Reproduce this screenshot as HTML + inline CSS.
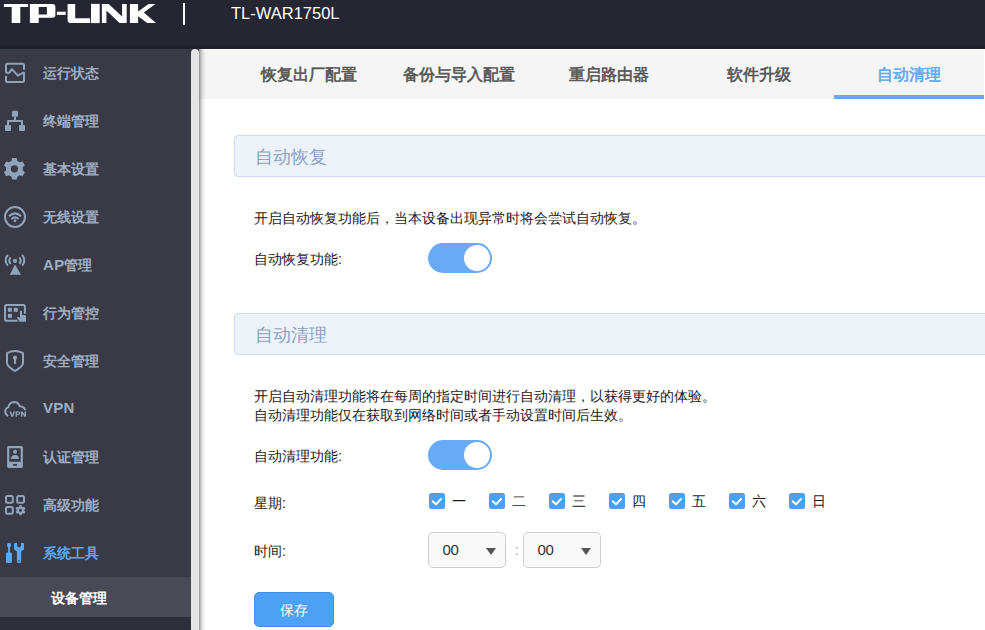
<!DOCTYPE html>
<html><head><meta charset="utf-8">
<style>
*{margin:0;padding:0;box-sizing:border-box}
html,body{width:985px;height:630px;overflow:hidden;background:#fff;font-family:"Liberation Sans",sans-serif}
.a{position:absolute}
#hdr{left:0;top:0;width:985px;height:49px;background:linear-gradient(to bottom,#262632 0,#262632 44px,#20202b 47.5px,#20202b 49px)}
#sep{left:182.5px;top:3px;width:2px;height:22px;background:#f6f6f6}
#model{left:231px;top:3px;font-size:16.5px;color:#fff;line-height:20px}
#side{left:0;top:49px;width:199px;height:581px;background:#3a3a47}
#sb{left:191px;top:49px;width:8px;height:581px;background:#e4e4e4;border-radius:4px 4px 0 0}
#shadow{left:199px;top:49px;width:8px;height:581px;background:linear-gradient(to right,rgba(0,0,0,.42) 0,rgba(0,0,0,.2) 2px,rgba(0,0,0,.06) 4.5px,rgba(0,0,0,0) 7px)}
#tabs{left:199px;top:49px;width:785px;height:50px;background:#f5f5f5;border-top:1px solid #fff}
.tab{top:62.5px;width:150px;text-align:center;font-size:16px;color:#555;-webkit-text-stroke:0.6px #555;line-height:24px}
#ul{left:834px;top:95px;width:150px;height:4px;background:#62a8f2}
.mi{left:43px;font-size:14px;font-weight:bold;color:#9eadc0;line-height:20px}
.ic{left:0;width:30px;height:30px}
.sec{left:234px;width:760px;height:42px;background:#edf2f9;border:1px solid #cddcec;border-radius:4px}
.sec span{position:absolute;left:20px;top:10px;font-size:18px;color:#8aa3c2;line-height:22px}
.t{font-size:14px;color:#1a1a1a;line-height:18px}
.tg{left:428px;width:64px;height:30px;border-radius:15px;background:#66abf4}
.tg:after{content:"";position:absolute;right:2px;top:2px;width:26px;height:26px;border-radius:13px;background:#fff}
.cb{top:493px;width:16px;height:16px;border-radius:3px;background:#4a9ff6}
.wd{top:492px;font-size:14px;color:#1a1a1a;line-height:18px}
.sel{top:532px;width:78px;height:36px;border:1px solid #cfcfcf;border-radius:5px;background:#f9f9f9}
.sel span{position:absolute;left:13.5px;top:8px;font-size:15px;letter-spacing:-0.3px;color:#333;line-height:18px}
.sel i{position:absolute;left:57px;top:15px;width:0;height:0;border-left:5px solid transparent;border-right:5px solid transparent;border-top:7px solid #555}
#btn{left:254px;top:592px;width:80px;height:35px;background:#4ca1f7;border:1px solid #3f90e6;border-radius:5px;color:#fff;font-size:14px;text-align:center;line-height:34px}
</style></head><body>
<div id="hdr" class="a"></div>
<svg class="a" style="left:0;top:0" width="160" height="30" viewBox="0 0 160 30">
<g fill="#fff">
<polygon points="3.9,3.9 28.1,3.9 28.1,7.1 20.3,7.1 20.3,23.1 11.7,23.1 11.7,7.1 3.9,7.1"/>
<path d="M29.9 3.9H52.4Q55.4 3.9 55.4 6.9V14.8Q55.4 17.8 52.4 17.8H38.7V23.1H29.9ZM38.7 7.1V14.6H46.9V7.1Z" fill-rule="evenodd"/>
<rect x="56.9" y="11.7" width="8.8" height="3.2"/>
<path d="M67.6 4.1H75.2V18.3H90.2V22.9H70.4Q67.6 22.9 67.6 20.1Z"/>
<rect x="91" y="3.9" width="8.7" height="19.2"/>
<polygon points="101.9,3.9 108.6,3.9 122.1,16.6 122.1,3.9 126.7,3.9 126.7,23.1 119.6,23.1 106.4,10.6 106.4,23.1 101.9,23.1"/>
<polygon points="129.9,3.9 138.1,3.9 138.1,11.6 148.6,3.9 155.4,3.9 143.8,12.6 156,23.1 147.2,23.1 138.1,16.3 138.1,23.1 129.9,23.1"/>
</g></svg>
<div id="sep" class="a"></div>
<div id="model" class="a">TL-WAR1750L</div>

<div id="side" class="a"></div>
<div class="a" style="left:0;top:577px;width:191px;height:40px;background:#4a4a57"></div>
<div class="a" style="left:0;top:617px;width:191px;height:13px;background:#2f2f3b"></div>
<div id="sb" class="a"></div>

<!-- sidebar icons -->
<svg class="a" style="left:0;top:48px" width="30" height="530" viewBox="0 48 30 530">
<g fill="none" stroke="#8fa3bb" stroke-width="2" stroke-linejoin="round">
<!-- status -->
<path d="M6 72.8V65.3Q6 63.8 7.5 63.8H22.5Q24 63.8 24 65.3V69.7"/>
<path d="M6 72.8H9.3L11.9 69.1L17.9 75.6L22.9 72.8H24V80.5Q24 82 22.5 82H7.5Q6 82 6 80.5V75.9"/>
<!-- network -->
<path d="M15 116.5V121H8V125M15 121H22V125"/>
<!-- wifi -->
<circle cx="15" cy="217" r="10"/>
<path d="M9 216.3Q15 210.5 21 216.3M11.5 219Q15 215.8 18.5 219"/>
<!-- ap -->
<path d="M7.8 254.8Q3.5 260.2 7.8 265.6M22.2 254.8Q26.5 260.2 22.2 265.6M10.6 257.4Q8 260.7 10.6 264M19.4 257.4Q22 260.7 19.4 264"/>
<!-- behaviour -->
<path d="M24.9 313.7V306.5Q24.9 305 23.4 305H6.6Q5 305 5 306.5V319.3Q5 320.8 6.6 320.8H17.5"/>
<!-- shield -->
<path d="M7 353.2Q15 349 23 353.2V363Q23 366.5 15 371Q7 366.5 7 363Z"/>
<!-- vpn cloud -->
<path d="M7.9 416.2Q4.3 413 5.6 409.7Q6.5 407.6 8.3 407.3Q9.6 402.1 14 402Q18.4 402.1 19.6 406.3Q24.3 406.6 25.3 410.3"/>
<!-- advanced -->
<rect x="6" y="496" width="6.8" height="6.8" rx="1.5"/>
<rect x="17.2" y="496" width="6.8" height="6.8" rx="1.5"/>
<rect x="6" y="507" width="6.8" height="6.8" rx="1.5"/>
</g>
<g fill="#8fa3bb">
<rect x="12" y="110.8" width="6" height="6" rx="1"/>
<rect x="5" y="125" width="6" height="6" rx="1"/>
<rect x="19" y="125" width="6" height="6" rx="1"/>
<!-- gear -->
<path fill-rule="evenodd" d="M11.50 160.92L12.10 158.04L16.70 158.04L17.30 160.92A8.40 8.40 0 0 1 19.78 162.35L22.57 161.43L24.87 165.41L22.68 167.37A8.40 8.40 0 0 1 22.68 170.23L24.87 172.19L22.57 176.17L19.78 175.25A8.40 8.40 0 0 1 17.30 176.68L16.70 179.56L12.10 179.56L11.50 176.68A8.40 8.40 0 0 1 9.02 175.25L6.23 176.17L3.93 172.19L6.12 170.23A8.40 8.40 0 0 1 6.12 167.37L3.93 165.41L6.23 161.43L9.02 162.35A8.40 8.40 0 0 1 11.50 160.92ZM14.40 165.20A3.60 3.60 0 1 0 14.40 172.40A3.60 3.60 0 1 0 14.40 165.20Z"/>
<circle cx="15" cy="220.8" r="1.4"/>
<circle cx="15" cy="260.9" r="2.1"/>
<polygon points="15,264.5 9.8,274.8 21,274.8"/>
<rect x="7.9" y="307.8" width="4" height="4"/>
<rect x="13.8" y="307.8" width="4" height="4"/>
<rect x="7.9" y="313.9" width="4" height="4"/>
<path d="M20 311.5Q20 310.6 21 310.6Q22 310.6 22 311.5V315H24.5Q26 315 26 316.5V321.8H19.5L17.3 318.2Q16.8 317.3 17.8 316.8Q18.5 316.5 19.2 317.3L20 318Z"/>
<circle cx="15" cy="357.7" r="2.1"/>
<rect x="13.9" y="357.7" width="2.2" height="6.2"/>
<path fill-rule="evenodd" d="M9.4 411.4H11L12.2 415L13.4 411.4H15L13 416.8H11.4Z M15.6 411.4H18.8Q20.5 411.4 20.5 413.1Q20.5 414.8 18.8 414.8H17V416.8H15.6Z M17 412.5V413.7H18.6Q19.1 413.7 19.1 413.1Q19.1 412.5 18.6 412.5Z M21 411.4H22.4L24.6 414.5V411.4H26V416.8H24.6L22.4 413.7V416.8H21Z"/>
<path fill-rule="evenodd" d="M8.6 446H21.4Q22.9 446 22.9 447.5V466.5Q22.9 468 21.4 468H8.6Q7.1 468 7.1 466.5V447.5Q7.1 446 8.6 446Z M9.3 448.2V461.8H20.7V448.2Z M13.1 464.1V465.8H16.9V464.1Z"/>
<circle cx="15" cy="451.8" r="2"/>
<path d="M11 458.9Q11 455.1 15 455.1Q19 455.1 19 458.9Z"/>
<path fill-rule="evenodd" d="M19.10 506.66L19.40 505.32L21.60 505.32L21.90 506.66A3.90 3.90 0 0 1 22.95 507.27L24.26 506.86L25.36 508.76L24.35 509.69A3.90 3.90 0 0 1 24.35 510.91L25.36 511.84L24.26 513.74L22.95 513.33A3.90 3.90 0 0 1 21.90 513.94L21.60 515.28L19.40 515.28L19.10 513.94A3.90 3.90 0 0 1 18.05 513.33L16.74 513.74L15.64 511.84L16.65 510.91A3.90 3.90 0 0 1 16.65 509.69L15.64 508.76L16.74 506.86L18.05 507.27A3.90 3.90 0 0 1 19.10 506.66ZM20.50 508.80A1.50 1.50 0 1 0 20.50 511.80A1.50 1.50 0 1 0 20.50 508.80Z"/>
</g>
<g fill="#5aa8f5">
<path d="M9 542.8Q10.9 542.8 11 545Q11 546.6 9.9 547.4V552.6H10.6Q11.9 552.6 11.9 554V561.5Q11.9 563 10.4 563H7.5Q6 563 6 561.5V554Q6 552.6 7.4 552.6H8.1V547.4Q7 546.6 7 545Q7.1 542.8 9 542.8Z"/>
<path fill-rule="evenodd" d="M14 543.2L17.1 542.8V545.5Q17.1 547.6 19.05 547.6Q21 547.6 21 545.5V542.8L24 543.2V549.5L21.2 551.2V561.5Q21.2 563 19.7 563H18.4Q16.9 563 16.9 561.5V551.2L14 549.5Z M18.3 560.2V561.6H19.8V560.2Z"/>
</g>
</svg>

<div class="a mi" style="top:63px">运行状态</div>
<div class="a mi" style="top:111px">终端管理</div>
<div class="a mi" style="top:159px">基本设置</div>
<div class="a mi" style="top:207px">无线设置</div>
<div class="a mi" style="top:255px"><span style="font-size:15px;letter-spacing:0.3px">AP</span>管理</div>
<div class="a mi" style="top:303px">行为管控</div>
<div class="a mi" style="top:351px">安全管理</div>
<div class="a mi" style="top:398px;font-size:15px;letter-spacing:0.2px">VPN</div>
<div class="a mi" style="top:447px">认证管理</div>
<div class="a mi" style="top:495px">高级功能</div>
<div class="a mi" style="top:543px;color:#5aa8f5">系统工具</div>
<div class="a mi" style="top:588px;left:51px;color:#fff">设备管理</div>

<!-- content -->
<div id="tabs" class="a"></div>
<div id="shadow" class="a"></div>
<div class="a tab" style="left:234px">恢复出厂配置</div>
<div class="a tab" style="left:384px">备份与导入配置</div>
<div class="a tab" style="left:534px">重启路由器</div>
<div class="a tab" style="left:684px">软件升级</div>
<div class="a tab" style="left:834px;color:#62a8f2;-webkit-text-stroke-color:#62a8f2">自动清理</div>
<div id="ul" class="a"></div>

<div class="a sec" style="top:135px"><span>自动恢复</span></div>
<div class="a t" style="left:254px;top:209px">开启自动恢复功能后，当本设备出现异常时将会尝试自动恢复。</div>
<div class="a t" style="left:254px;top:250px">自动恢复功能:</div>
<div class="a tg" style="top:243px"></div>

<div class="a sec" style="top:313px"><span>自动清理</span></div>
<div class="a t" style="left:254px;top:387px">开启自动清理功能将在每周的指定时间进行自动清理，以获得更好的体验。</div>
<div class="a t" style="left:254px;top:406px">自动清理功能仅在获取到网络时间或者手动设置时间后生效。</div>
<div class="a t" style="left:254px;top:447px">自动清理功能:</div>
<div class="a tg" style="top:440px"></div>

<div class="a t" style="left:254px;top:494px">星期:</div>
<svg class="a" style="left:0;top:0" width="985" height="630" viewBox="0 0 985 630">
<g>
<rect x="429" y="493" width="16" height="16" rx="2.5" fill="#4a9ff6"/>
<rect x="489" y="493" width="16" height="16" rx="2.5" fill="#4a9ff6"/>
<rect x="549" y="493" width="16" height="16" rx="2.5" fill="#4a9ff6"/>
<rect x="609" y="493" width="16" height="16" rx="2.5" fill="#4a9ff6"/>
<rect x="669" y="493" width="16" height="16" rx="2.5" fill="#4a9ff6"/>
<rect x="729" y="493" width="16" height="16" rx="2.5" fill="#4a9ff6"/>
<rect x="789" y="493" width="16" height="16" rx="2.5" fill="#4a9ff6"/>
</g>
<g fill="none" stroke="#fff" stroke-width="1.9" stroke-linecap="round" stroke-linejoin="round">
<path d="M432.7 501.2L436.0 504.3L441.0 499"/>
<path d="M492.7 501.2L496.0 504.3L501.0 499"/>
<path d="M552.7 501.2L556.0 504.3L561.0 499"/>
<path d="M612.7 501.2L616.0 504.3L621.0 499"/>
<path d="M672.7 501.2L676.0 504.3L681.0 499"/>
<path d="M732.7 501.2L736.0 504.3L741.0 499"/>
<path d="M792.7 501.2L796.0 504.3L801.0 499"/>
</g>
</svg>
<div class="a wd" style="left:452px">一</div>
<div class="a wd" style="left:512px">二</div>
<div class="a wd" style="left:572px">三</div>
<div class="a wd" style="left:632px">四</div>
<div class="a wd" style="left:692px">五</div>
<div class="a wd" style="left:752px">六</div>
<div class="a wd" style="left:812px">日</div>

<div class="a t" style="left:254px;top:542px">时间:</div>
<div class="a sel" style="left:428px"><span>00</span><i></i></div>
<div class="a" style="left:515px;top:541px;font-size:14px;color:#999;line-height:18px">:</div>
<div class="a sel" style="left:523px"><span>00</span><i></i></div>

<div id="btn" class="a">保存</div>
</body></html>
